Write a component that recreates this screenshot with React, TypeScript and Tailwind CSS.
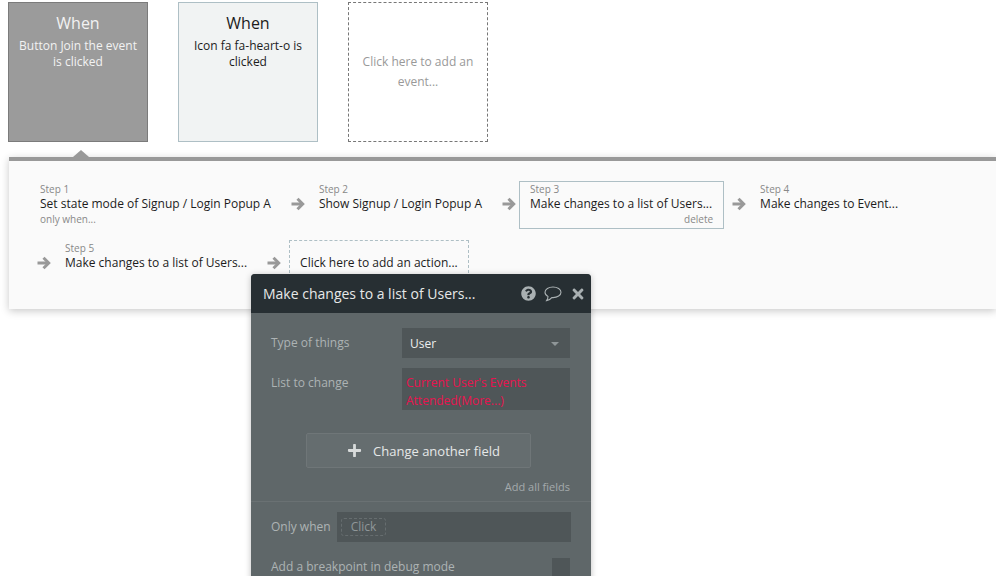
import React from 'react';
import { FaPlus, FaQuestionCircle, FaTimes } from 'react-icons/fa';

function Arrow() {
  return (
    <svg width="14" height="14" viewBox="0 0 14 14" className="mt-[-2px]" fill="none" stroke="currentColor" strokeWidth="3">
      <path d="M0.5 7H11.5" />
      <path d="M6.5 1.8L11.7 7L6.5 12.2" />
    </svg>
  );
}

function Bubble() {
  return (
    <svg width="18" height="16" viewBox="0 0 18 16" className="ml-[8px] text-[#a9b0b2]" fill="none" stroke="currentColor" strokeWidth="1.1">
      <path d="M9 1C4.6 1 1 3.3 1 6.3C1 8 2.1 9.5 4 10.5C4 12 3.3 13.6 2.6 14.6C4.6 14.3 6.6 13.2 7.8 11.6C8.2 11.6 8.6 11.6 9 11.6C13.4 11.6 17 9.2 17 6.3C17 3.3 13.4 1 9 1Z" />
    </svg>
  );
}

function EventCard({ title, text, kind }: { title: string; text: string; kind: 'active' | 'idle' }) {
  const look = kind === 'active' ? 'bg-[#9b9b9b] border-[#7b7b7b] text-[#f2f2f2]' : 'bg-[#f1f3f3] border-[#aebfc5] text-[#1c1c1c]';
  return (
    <div className={`w-[140px] h-[140px] border px-[9px] pt-[7px] text-center ${look}`}>
      <div className="text-[16px] leading-[26px]">{title}</div>
      <div className="text-[12px] leading-[16px] mt-[2px]">{text}</div>
    </div>
  );
}

function Step({ label, title, note, selected, first }: { label: string; title: string; note?: string; selected?: boolean; first?: boolean }) {
  return (
    <div className="flex items-start">
      {!first && (
        <div className="ml-[8px] mr-[3px] w-[14px] h-[48px] flex items-center text-[#999999]">
          <Arrow />
        </div>
      )}
      <div className={`h-[48px] border pl-[10px] pr-[11px] ${selected ? 'border-[#aebfc5]' : 'border-transparent'}`}>
        <div className="text-[10px] leading-[14px] text-[#888888]">{label}</div>
        <div className="text-[12px] leading-[16px] text-[#1c1c1c] whitespace-nowrap">{title}</div>
        {note && <div className="text-[10px] leading-[15px] text-[#888888]">{note}</div>}
        {selected && <div className="text-[10px] leading-[15px] text-[#888888] text-right mr-[-1px]">delete</div>}
      </div>
    </div>
  );
}

export default function App() {
  return (
    <div className="relative w-[996px] h-[576px] overflow-hidden bg-white font-['Open_Sans',sans-serif]">
      <div className="flex gap-[30px] pl-[8px] pt-[2px]">
        <EventCard kind="active" title="When" text="Button Join the event is clicked" />
        <EventCard kind="idle" title="When" text="Icon fa fa-heart-o is clicked" />
        <div className="w-[140px] h-[140px] border border-dashed border-[#777777] flex items-center justify-center text-center px-[10px] text-[12px] leading-[20px] text-[#999999]">
          Click here to add an event...
        </div>
      </div>

      <div className="relative ml-[9px] mt-[15px] h-[152px] bg-[#fafafa] border-t-4 border-[#999999] shadow-[0_2px_8px_rgba(0,0,0,0.22)]">
        <div className="absolute left-[64px] top-[-11px] w-0 h-0 border-x-[8px] border-x-transparent border-b-[7px] border-b-[#999999]" />
        <div className="flex flex-wrap pl-[20px] pt-[20px] gap-y-[11px]">
          <Step first label="Step 1" title="Set state mode of Signup / Login Popup A" note="only when..." />
          <Step label="Step 2" title="Show Signup / Login Popup A" />
          <Step selected label="Step 3" title="Make changes to a list of Users..." />
          <Step label="Step 4" title="Make changes to Event..." />
          <Step label="Step 5" title="Make changes to a list of Users..." />
          <div className="flex items-start">
            <div className="ml-[8px] mr-[8px] w-[14px] h-[48px] flex items-center text-[#999999]">
              <Arrow />
            </div>
            <div className="w-[180px] h-[48px] border border-dashed border-[#aebfc5] px-[10px] pt-[14px] text-[12px] leading-[16px] text-[#1c1c1c] whitespace-nowrap">
              Click here to add an action...
            </div>
          </div>
        </div>
      </div>

      <div className="absolute left-[251px] top-[274px] w-[340px] h-[330px] rounded-t-[4px] overflow-hidden bg-[#5f6769] shadow-[0_1px_6px_rgba(0,0,0,0.25)]">
        <div className="h-[39px] bg-[#272f33] flex items-center pl-[12px] pr-[5px]">
          <div className="text-[14px] text-[#e6e8e8] flex-1 whitespace-nowrap">Make changes to a list of Users...</div>
          <FaQuestionCircle size={15} className="text-[#a9b0b2]" />
          <Bubble />
          <FaTimes size={16} className="text-[#a9b0b2] ml-[8px]" />
        </div>

        <div className="px-[20px] pt-[15px]">
          <div className="flex items-center">
            <div className="w-[131px] text-[12px] text-[#adb3b4]">Type of things</div>
            <div className="w-[168px] h-[30px] bg-[#4f5658] flex items-center justify-between pl-[8px] pr-[11px] pt-[1px] text-[12px] text-[#eceeee]">
              User
              <span className="w-0 h-0 border-x-[4px] border-x-transparent border-t-[4px] border-t-[#8f9698]" />
            </div>
          </div>
          <div className="flex mt-[10px]">
            <div className="w-[131px] text-[12px] text-[#adb3b4] pt-[6px]">List to change</div>
            <div className="w-[168px] h-[42px] bg-[#4f5658] px-[4px] pt-[6px] text-[12px] leading-[18px] text-[#e8134f]">
              Current User's Events Attended(More...)
            </div>
          </div>
          <div className="ml-[35px] mt-[23px] w-[225px] h-[35px] rounded-[2px] bg-[#656d6f] border border-[#6f7678] flex items-center justify-center pl-[10px] pt-[2px] text-[13px] text-[#e6e8e8]">
            <FaPlus size={15} className="mr-[11px] mt-[-2px] text-[#d8dbdb]" />
            Change another field
          </div>
          <div className="text-right text-[11px] leading-[16px] text-[#a4aaac] mt-[11px] mr-[1px]">Add all fields</div>
        </div>

        <div className="h-px bg-[#6a7173] mt-[6px]" />

        <div className="px-[20px] pt-[10px]">
          <div className="flex items-center">
            <div className="w-[66px] text-[12px] text-[#adb3b4]">Only when</div>
            <div className="w-[234px] h-[30px] bg-[#4f5658] flex items-center pl-[4px]">
              <div className="w-[45px] h-[18px] border border-dashed border-[#666d6f] rounded-[3px] flex items-center justify-center text-[12px] text-[#8f9698]">Click</div>
            </div>
          </div>
          <div className="flex items-center justify-between mt-[16px] mr-[1px]">
            <div className="text-[12px] text-[#adb3b4]">Add a breakpoint in debug mode</div>
            <div className="w-[18px] h-[18px] bg-[#4f5658]" />
          </div>
        </div>
      </div>
    </div>
  );
}
